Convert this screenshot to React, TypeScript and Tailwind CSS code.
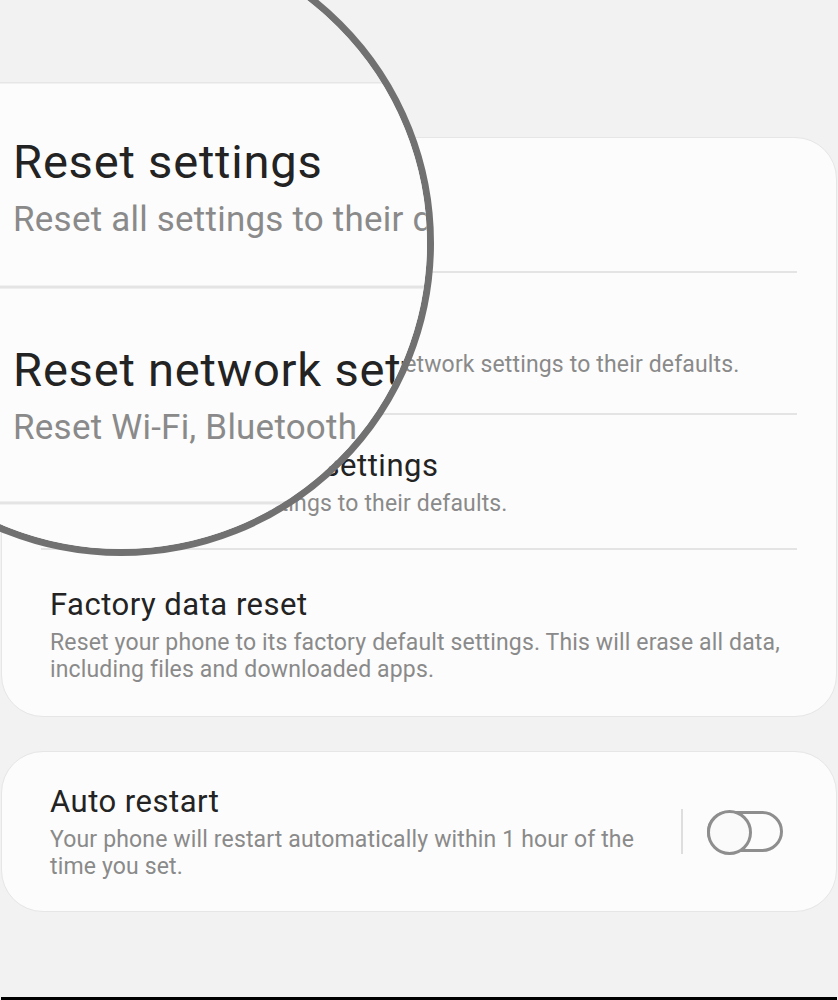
import React from 'react';

const font = { fontFamily: "Roboto, 'Noto Sans', sans-serif" };

function Row({ title, sub, className }: { title: string; sub: React.ReactNode; className: string }) {
  return (
    <div className={className}>
      <div className="h-[36px] text-[31px] leading-[36px] tracking-[0.5px] text-[#232323]">{title}</div>
      <div className="mt-[6px] text-[23px] leading-[27px] tracking-[0.15px] text-[#8a8a8a]">{sub}</div>
    </div>
  );
}

function Screen() {
  return (
    <div className="flex h-[1000px] w-[838px] flex-col bg-[#f2f2f2] px-px pt-[137px]" style={font}>
      <div className="rounded-[42px] border border-[#e6e6e6] bg-[#fcfcfc]">
        <Row className="h-[133px] pl-[48px] pt-[34px]" title="Reset settings" sub="Reset all settings to their defaults." />
        <div className="mx-[39px] h-[2px] bg-[#e4e4e4]" />
        <Row
          className="h-[140px] pl-[48px] pt-[36px]"
          title="Reset network settings"
          sub="Reset Wi-Fi, Bluetooth, and other network settings to their defaults."
        />
        <div className="mx-[39px] h-[2px] bg-[#e4e4e4]" />
        <Row
          className="h-[133px] pl-[48px] pt-[33px]"
          title="Reset accessibility settings"
          sub="Reset accessibility settings to their defaults."
        />
        <div className="mx-[39px] h-[2px] bg-[#e4e4e4]" />
        <Row
          className="h-[166px] pl-[48px] pr-[40px] pt-[37px]"
          title="Factory data reset"
          sub="Reset your phone to its factory default settings. This will erase all data, including files and downloaded apps."
        />
      </div>

      <div className="mt-[34px] flex h-[161px] items-center rounded-[42px] border border-[#e6e6e6] bg-[#fcfcfc] pl-[48px] pr-[53px]">
        <div className="w-[600px]">
          <div className="h-[36px] text-[31px] leading-[36px] tracking-[0.5px] text-[#232323]">Auto restart</div>
          <div className="mt-[6px] text-[23px] leading-[27px] tracking-[0.15px] text-[#8a8a8a]">
            Your phone will restart automatically within 1 hour of the time you set.
          </div>
        </div>
        <div className="ml-auto h-[45px] w-[2px] bg-[#dedede]" />
        <div className="relative ml-[24px] h-[41px] w-[76px] rounded-full border-[3px] border-[#8e8e8e]">
          <div className="absolute left-[-3px] top-[-4px] h-[45px] w-[45px] rounded-full border-[3px] border-[#8e8e8e] bg-[#fafafa]" />
        </div>
      </div>

      <div className="mt-auto h-[3px] bg-black" />
    </div>
  );
}

export default function App() {
  return (
    <div className="relative h-[1000px] w-[838px] overflow-hidden">
      <Screen />
      {/* magnifier lens */}
      <div className="absolute left-[-192px] top-[-70px] h-[626px] w-[626px] overflow-hidden rounded-full border-[7px] border-[#717171]">
        <div className="absolute left-[185px] top-[63px] origin-[121px_243px] scale-[1.52]">
          <Screen />
        </div>
      </div>
    </div>
  );
}
